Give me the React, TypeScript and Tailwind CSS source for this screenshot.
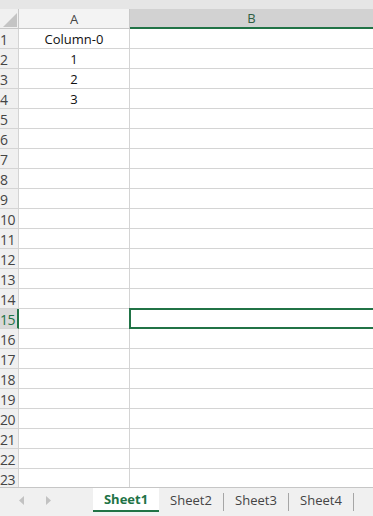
const rows = Array.from({ length: 23 }, (_, i) => i + 1)
const values: Record<number, string> = { 1: 'Column-0', 2: '1', 3: '2', 4: '3' }
const sheets = ['Sheet1', 'Sheet2', 'Sheet3', 'Sheet4']

function Row({ n }: { n: number }) {
  const selected = n === 15
  return (
    <div className="flex h-[20px] shrink-0">
      <div
        className={
          selected
            ? 'w-[19px] shrink-0 border-b border-r-2 border-b-[#d4d4d4] border-r-[#217346] bg-[#d9d9d9] text-[14px] tracking-[-0.5px] text-[#217346] leading-[21px] whitespace-nowrap'
            : 'w-[19px] shrink-0 border-b border-r border-[#d4d4d4] bg-[#f0f0f0] text-[14px] tracking-[-0.5px] text-[#444] leading-[21px] whitespace-nowrap'
        }
      >
        {n}
      </div>
      <div className="w-[111px] shrink-0 border-b border-r border-[#d4d4d4] text-center leading-[21px] text-[#111]">
        {values[n] ?? ''}
      </div>
      <div className="relative flex-1 border-b border-[#d4d4d4]">
        {selected && (
          <div className="absolute -left-px -top-px -right-[2px] -bottom-px border-2 border-[#217346]" />
        )}
      </div>
    </div>
  )
}

export default function App() {
  return (
    <div
      className="flex h-[516px] w-[373px] flex-col overflow-hidden bg-white text-[13px]"
      style={{ fontFamily: '"Open Sans", "Noto Sans", sans-serif' }}
    >
      {/* top strip */}
      <div className="h-[9px] shrink-0 bg-[#e6e6e6]" />

      {/* column headers */}
      <div className="flex h-[20px] shrink-0">
        <div className="relative w-[19px] shrink-0 border-b border-r border-[#c8c8c8] bg-[#f0f0f0]">
          <svg className="absolute bottom-[1px] right-[1px]" width="14" height="14" viewBox="0 0 14 14">
            <polygon points="14,0 14,14 0,14" fill="#c4c4c4" />
          </svg>
        </div>
        <div className="w-[111px] shrink-0 border-b border-r border-[#c8c8c8] bg-[#f3f3f3] text-center leading-[20px] text-[#444]">
          A
        </div>
        <div className="flex-1 border-b-2 border-[#217346] bg-[#d2d2d2] text-center leading-[19px] text-[#2f5e43]">
          B
        </div>
      </div>

      {/* grid */}
      <div className="flex min-h-0 flex-1 flex-col overflow-hidden">
        {rows.map((n) => (
          <Row key={n} n={n} />
        ))}
      </div>

      {/* sheet tabs */}
      <div className="flex h-[29px] shrink-0 items-start border-t border-[#c6c6c6] bg-[#f0f0f0]">
        <div className="flex h-[24px] w-[93px] shrink-0 items-center gap-[20px] pl-[19px]">
          <svg width="6" height="9" viewBox="0 0 6 9">
            <polygon points="5,0 5,9 0,4.5" fill="#c2c2c2" />
          </svg>
          <svg width="6" height="9" viewBox="0 0 6 9">
            <polygon points="1,0 1,9 6,4.5" fill="#c2c2c2" />
          </svg>
        </div>
        {sheets.map((s, i) =>
          i === 0 ? (
            <div
              key={s}
              className="flex h-[24px] w-[66px] shrink-0 items-center justify-center border-b-2 border-[#217346] bg-white pt-px font-bold text-[#217346]"
            >
              {s}
            </div>
          ) : (
            <div key={s} className="flex h-[24px] w-[65px] shrink-0 items-center">
              <span className="flex-1 pt-[2px] text-center text-[#444]">{s}</span>
              <span className="mt-[3px] h-[18px] w-px bg-[#a6a6a6]" />
            </div>
          )
        )}
      </div>
    </div>
  )
}
